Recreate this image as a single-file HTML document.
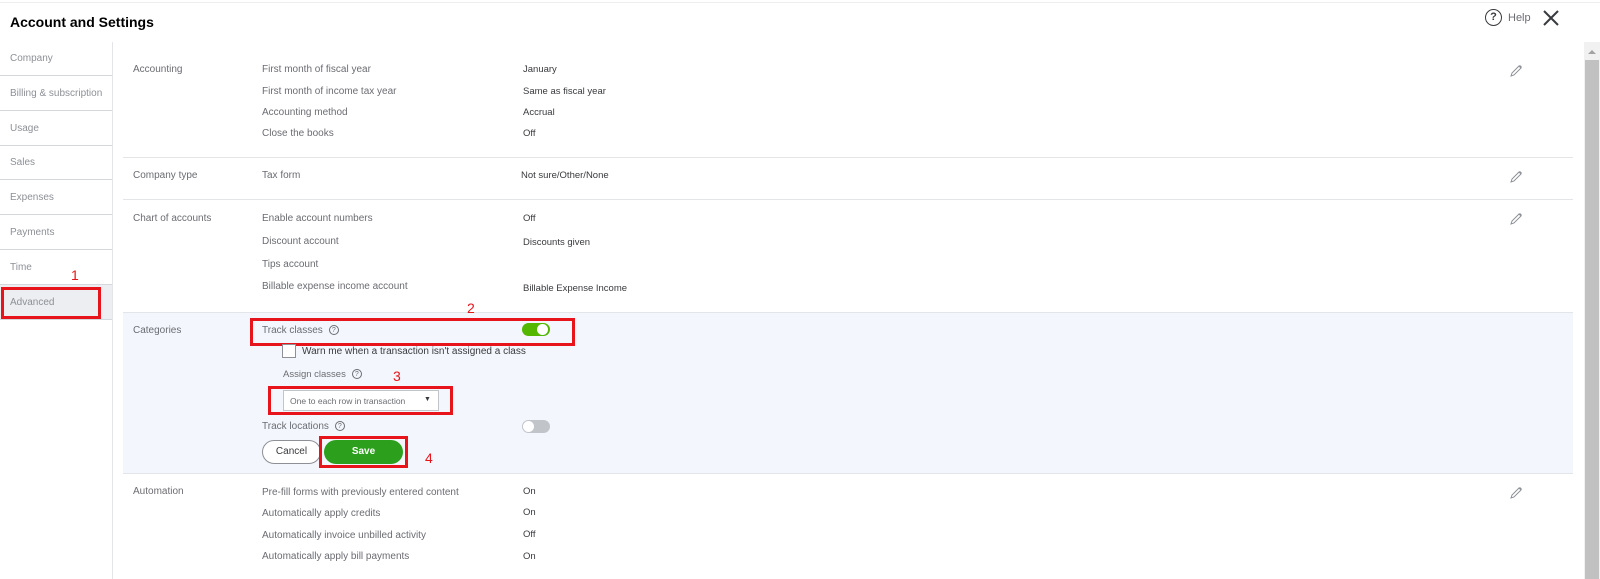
<!DOCTYPE html>
<html><head><style>
*{margin:0;padding:0;box-sizing:border-box}
body{width:1600px;height:579px;overflow:hidden;background:#fff;font-family:"Liberation Sans",sans-serif;position:relative;color:#6b6c72;font-size:10px}
.a{position:absolute;white-space:nowrap}
.v{color:#393a3d;font-size:9.5px}
.hl{position:absolute;height:1px;background:#e3e5e8}
.side{position:absolute;left:0;width:112px;height:35px;border-bottom:1px solid #d4d7dc;padding:12px 0 0 10px;font-size:10px;color:#8d9096}
.red{position:absolute;border:3px solid #e8141b}
.num{position:absolute;color:#e8141b;font-size:14px}
.pen{position:absolute;width:14px;height:14px}
.q{display:inline-block;width:10px;height:10px;border:1px solid #6b6c72;border-radius:50%;font-size:7px;text-align:center;line-height:9px;margin-left:6px;vertical-align:middle}
</style></head><body>
<div class="hl" style="left:0;top:2px;width:1600px;background:#eee"></div>
<div class="a" style="left:10px;top:14px;font-size:14px;font-weight:bold;color:#000">Account and Settings</div>
<div class="a" style="left:1485px;top:9px;width:17px;height:17px;border:1.5px solid #393a3d;border-radius:50%;text-align:center;font-size:11px;line-height:14px;color:#393a3d;font-weight:bold">?</div>
<div class="a" style="left:1508px;top:12px;font-size:11px;color:#6b6c72">Help</div>
<svg class="a" style="left:1542px;top:9px" width="18" height="18" viewBox="0 0 18 18"><path d="M2 2L16 16M16 2L2 16" stroke="#393a3d" stroke-width="2"/></svg>
<div class="a" style="left:112px;top:42px;width:1px;height:537px;background:#e3e5e8"></div>
<div class="side" style="top:41px">Company</div>
<div class="side" style="top:76px">Billing &amp; subscription</div>
<div class="side" style="top:111px">Usage</div>
<div class="side" style="top:145px">Sales</div>
<div class="side" style="top:180px">Expenses</div>
<div class="side" style="top:215px">Payments</div>
<div class="side" style="top:250px">Time</div>
<div class="side" style="top:285px;background:#eceef1">Advanced</div>
<div class="red" style="left:1px;top:287px;width:100px;height:32px"></div>
<div class="num" style="left:71px;top:267px">1</div>
<div class="a" style="left:1584px;top:42px;width:16px;height:537px;background:#f1f1f1"></div>
<div class="a" style="left:1585px;top:60px;width:14px;height:519px;background:#c1c1c1"></div>
<div class="a" style="left:1588px;top:50px;width:0;height:0;border-left:4px solid transparent;border-right:4px solid transparent;border-bottom:4px solid #a3a3a3"></div>
<div class="a" style="left:123px;top:312px;width:1450px;height:161px;background:#f3f7fd"></div>
<div class="hl" style="left:123px;top:157px;width:1450px"></div>
<div class="hl" style="left:123px;top:199px;width:1450px"></div>
<div class="hl" style="left:123px;top:312px;width:1450px"></div>
<div class="hl" style="left:123px;top:473px;width:1450px"></div>
<div class="a" style="left:133px;top:64px">Accounting</div>
<div class="a" style="left:262px;top:64px">First month of fiscal year</div><div class="a v" style="left:523px;top:64px">January</div>
<div class="a" style="left:262px;top:86px">First month of income tax year</div><div class="a v" style="left:523px;top:86px">Same as fiscal year</div>
<div class="a" style="left:262px;top:107px">Accounting method</div><div class="a v" style="left:523px;top:107px">Accrual</div>
<div class="a" style="left:262px;top:128px">Close the books</div><div class="a v" style="left:523px;top:128px">Off</div>
<div class="a" style="left:133px;top:170px">Company type</div>
<div class="a" style="left:262px;top:170px">Tax form</div><div class="a v" style="left:521px;top:170px">Not sure/Other/None</div>
<div class="a" style="left:133px;top:213px">Chart of accounts</div>
<div class="a" style="left:262px;top:213px">Enable account numbers</div><div class="a v" style="left:523px;top:213px">Off</div>
<div class="a" style="left:262px;top:236px">Discount account</div><div class="a v" style="left:523px;top:237px">Discounts given</div>
<div class="a" style="left:262px;top:259px">Tips account</div>
<div class="a" style="left:262px;top:281px">Billable expense income account</div><div class="a v" style="left:523px;top:283px">Billable Expense Income</div>
<svg class="pen" style="left:1509px;top:64px" viewBox="0 0 14 14"><path d="M2 12l1-3 7-7 2 2-7 7z" fill="none" stroke="#8d9096"/><path d="M10 2l2 2 1-1-2-2z" fill="#8d9096"/></svg>
<svg class="pen" style="left:1509px;top:170px" viewBox="0 0 14 14"><path d="M2 12l1-3 7-7 2 2-7 7z" fill="none" stroke="#8d9096"/><path d="M10 2l2 2 1-1-2-2z" fill="#8d9096"/></svg>
<svg class="pen" style="left:1509px;top:212px" viewBox="0 0 14 14"><path d="M2 12l1-3 7-7 2 2-7 7z" fill="none" stroke="#8d9096"/><path d="M10 2l2 2 1-1-2-2z" fill="#8d9096"/></svg>
<svg class="pen" style="left:1509px;top:486px" viewBox="0 0 14 14"><path d="M2 12l1-3 7-7 2 2-7 7z" fill="none" stroke="#8d9096"/><path d="M10 2l2 2 1-1-2-2z" fill="#8d9096"/></svg>
<div class="a" style="left:133px;top:325px">Categories</div>
<div class="a" style="left:262px;top:325px">Track classes<span class="q">?</span></div>
<div class="a" style="left:522px;top:323px;width:28px;height:13px;border-radius:7px;background:#53b700"></div>
<div class="a" style="left:537px;top:324px;width:11px;height:11px;border-radius:50%;background:#fff"></div>
<div class="red" style="left:250px;top:318px;width:325px;height:28px"></div>
<div class="num" style="left:467px;top:300px">2</div>
<div class="a" style="left:282px;top:344px;width:14px;height:14px;border:1px solid #8d9096;background:#fff"></div>
<div class="a" style="left:302px;top:346px;font-size:10px;color:#393a3d">Warn me when a transaction isn't assigned a class</div>
<div class="a" style="left:283px;top:369px;font-size:9.5px">Assign classes<span class="q">?</span></div>
<div class="num" style="left:393px;top:368px">3</div>
<div class="a" style="left:283px;top:390px;width:156px;height:21px;border:1px solid #c1c4c9;background:#fff;padding:5px 0 0 6px;font-size:8.5px">One to each row in transaction<span style="position:absolute;left:140px;top:5px;font-size:7px;color:#393a3d">▼</span></div>
<div class="red" style="left:268px;top:386px;width:185px;height:29px"></div>
<div class="a" style="left:262px;top:421px">Track locations<span class="q">?</span></div>
<div class="a" style="left:522px;top:420px;width:28px;height:13px;border-radius:7px;background:#c1c4c9"></div>
<div class="a" style="left:523px;top:421px;width:11px;height:11px;border-radius:50%;background:#fff"></div>
<div class="a" style="left:262px;top:440px;width:59px;height:24px;border:1px solid #8d9096;border-radius:12px;text-align:center;line-height:22px;font-size:10px;color:#393a3d;background:#fff">Cancel</div>
<div class="a" style="left:324px;top:440px;width:79px;height:24px;border-radius:12px;background:#2ca01c;text-align:center;line-height:24px;font-size:10px;color:#fff;font-weight:bold">Save</div>
<div class="red" style="left:319px;top:436px;width:89px;height:32px"></div>
<div class="num" style="left:425px;top:450px">4</div>
<div class="a" style="left:133px;top:486px">Automation</div>
<div class="a" style="left:262px;top:487px">Pre-fill forms with previously entered content</div><div class="a v" style="left:523px;top:486px">On</div>
<div class="a" style="left:262px;top:508px">Automatically apply credits</div><div class="a v" style="left:523px;top:507px">On</div>
<div class="a" style="left:262px;top:530px">Automatically invoice unbilled activity</div><div class="a v" style="left:523px;top:529px">Off</div>
<div class="a" style="left:262px;top:551px">Automatically apply bill payments</div><div class="a v" style="left:523px;top:551px">On</div>
</body></html>
